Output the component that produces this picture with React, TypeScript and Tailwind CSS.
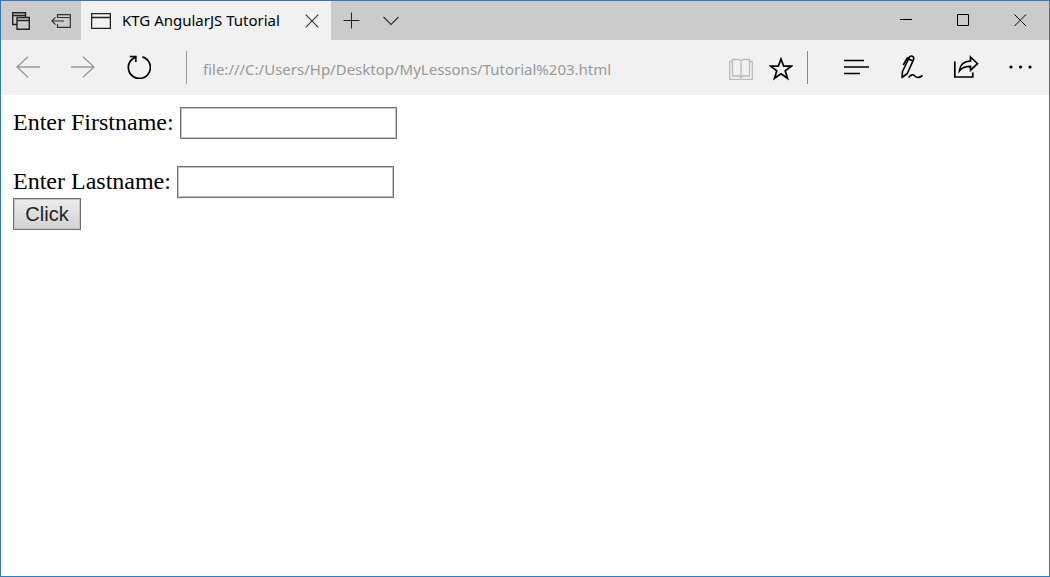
import { useState } from "react";
import type { ReactNode } from "react";

type IconProps = {
    w: number
    h: number
    className?: string
    children: ReactNode
}

const Icon = ({ w, h, className = "", children }: IconProps) => (
    <svg width={w} height={h} viewBox={`0 0 ${w} ${h}`} fill="none" stroke="currentColor" className={className} aria-hidden="true">
        {children}
    </svg>
)

type BarButtonProps = {
    label: string
    className: string
    children: ReactNode
}

const BarButton = ({ label, className, children }: BarButtonProps) => (
    <button type="button" aria-label={label} className={`flex h-full shrink-0 items-center justify-center ${className}`}>
        {children}
    </button>
)

const TitleBar = () => (
    <div className="flex h-[39px] items-stretch bg-[#cbcbcb] text-[#222]">
        <BarButton label="Tabs you've set aside" className="w-10">
            <Icon w={18} h={18}>
                <path d="M5 12.5H.7V.7h12.8V5M.7 3.5h12.8" strokeWidth="1.4" />
                <path d="M5 5.5h12.3v11.8H5zM5 8.5h12.3" strokeWidth="1.4" />
            </Icon>
        </BarButton>
        <BarButton label="Set these tabs aside" className="w-10">
            <Icon w={20} h={14} className="text-[#333]">
                <path d="M6.5 4V.7h12.8v12.6H6.5V10M6.5 3.5h13M.8 7H13M4.5 3.3.8 7l3.7 3.7" strokeWidth="1.2" />
            </Icon>
        </BarButton>
        <div className="flex w-[250px] items-center bg-[#f1f1f1] pr-3 pl-[10px]">
            <Icon w={20} h={16} className="shrink-0">
                <path d="M.6.6h18.8v14.8H.6zM.6 4.5h18.8" strokeWidth="1.3" />
            </Icon>
            <span className="ml-[11px] flex-1 whitespace-nowrap text-[15px] text-black">KTG AngularJS Tutorial</span>
            <button type="button" aria-label="Close tab">
                <Icon w={14} h={14} className="text-[#333]">
                    <path d="m.7.7 12.6 12.6M13.3.7.7 13.3" strokeWidth="1.1" />
                </Icon>
            </button>
        </div>
        <BarButton label="New tab" className="w-10">
            <Icon w={17} h={17}>
                <path d="M8.5.5v16M.5 8.5h16" />
            </Icon>
        </BarButton>
        <BarButton label="Show tab previews" className="w-10">
            <Icon w={16} h={10} className="text-[#333]">
                <path d="m.5 1 7.5 7.5L15.5 1" strokeWidth="1.2" />
            </Icon>
        </BarButton>
        <div className="ml-auto flex text-black">
            <BarButton label="Minimize" className="w-[57px]">
                <Icon w={13} h={13}>
                    <path d="M0 5.5h12" />
                </Icon>
            </BarButton>
            <BarButton label="Maximize" className="w-[57px]">
                <Icon w={13} h={13}>
                    <path d="M.5.5h11v11H.5z" />
                </Icon>
            </BarButton>
            <BarButton label="Close" className="w-[57px]">
                <Icon w={13} h={13}>
                    <path d="m.5.5 11.5 11.5M12 .5.5 12" />
                </Icon>
            </BarButton>
        </div>
    </div>
)

const AddressBar = () => {
    const [url, setUrl] = useState("file:///C:/Users/Hp/Desktop/MyLessons/Tutorial%203.html")

    return (
        <div className="flex h-[55px] items-center bg-[#f1f1f1] pr-px text-black">
            <BarButton label="Back" className="w-[55px] pb-0.5">
                <Icon w={25} h={22} className="text-[#999]">
                    <path d="M24 11H1M12 .7 1 11l11 10.3" strokeWidth="1.3" />
                </Icon>
            </BarButton>
            <BarButton label="Forward" className="w-[55px] pb-0.5">
                <Icon w={25} h={22} className="text-[#999]">
                    <path d="M0 11h23M12 .7 23 11 12 21.3" strokeWidth="1.3" />
                </Icon>
            </BarButton>
            <BarButton label="Refresh" className="w-[55px] pb-0.5">
                <Icon w={24} h={24}>
                    <path d="M15.5 1.9A11 11 0 1 1 5.3 4Q7 3 8.8 1.5" strokeWidth="1.7" />
                    <path d="M2.8 1.5h6v5.5" strokeWidth="1.7" />
                </Icon>
            </BarButton>
            <div className="mr-4 ml-5 h-[33px] w-px bg-[#999]" />
            <input
                type="text"
                aria-label="Address"
                value={url}
                onChange={(e) => setUrl(e.target.value)}
                className="min-w-0 flex-1 pt-1 text-[15px] text-[#999] outline-none"
            />
            <BarButton label="Reading view" className="w-10 pt-0.5">
                <Icon w={24} h={22} className="text-[#bbb]">
                    <path d="M3.5 1.5H10l2 1.5 2-1.5h6.5V18H14l-2 1.5-2-1.5H3.5zM12 3v16.5" strokeWidth="1.3" />
                    <path d="M3.5 3.5H.7v17.800h22.600V3.5h-2.800" strokeWidth="1.3" />
                </Icon>
            </BarButton>
            <BarButton label="Add to favorites" className="w-10 pt-0.5">
                <Icon w={24} h={24}>
                    <path d="m12 2 2.700 7.200h7.700l-6.200 4.600 2.300 7.500L12 16.700l-6.500 4.600 2.300-7.500-6.200-4.600h7.700z" strokeWidth="1.7" />
                </Icon>
            </BarButton>
            <div className="mr-5 ml-1.5 h-[33px] w-px bg-[#888]" />
            <BarButton label="Hub" className="w-[55px] pb-0.5">
                <Icon w={26} h={16}>
                    <path d="M1 1.500h20M1 8h25M1 14.500h16" strokeWidth="1.7" />
                </Icon>
            </BarButton>
            <BarButton label="Make a web note" className="w-[55px] pb-0.5">
                <Icon w={24} h={26}>
                    <path
                        d="M3 23.500 3.500 17.500 10 4Q11.300 1.200 13.400 2.200T14.500 5.700L8.300 19.500 3 23.500ZM9.500 5l4.600 2M10.300 3.300 8 4.300 4.300 11"
                        strokeWidth="1.6"
                        strokeLinejoin="round"
                    />
                    <path d="M9.500 23.500c2.500-3 4.500-3.500 6.300-1.500 2.200 2.400 4.500 2 7.700-.5" strokeWidth="1.6" />
                </Icon>
            </BarButton>
            <BarButton label="Share" className="w-[55px] pb-0.5">
                <Icon w={26} h={24}>
                    <path d="M1.800 6.500v15.500h18V17.500" strokeWidth="1.7" />
                    <path d="M17.500 2 24.500 8.700l-7 6.600v-4c-5 0-8.500 1-11 4.500.5-6 4.500-9.600 11-9.800z" strokeWidth="1.7" />
                </Icon>
            </BarButton>
            <BarButton label="More" className="w-[55px] pb-0.5">
                <Icon w={23} h={4}>
                    <g fill="currentColor" stroke="none">
                        <circle cx="2" cy="2" r="1.6" />
                        <circle cx="11.5" cy="2" r="1.6" />
                        <circle cx="21" cy="2" r="1.6" />
                    </g>
                </Icon>
            </BarButton>
        </div>
    )
}

const labelClass = "pb-0.5 leading-7"
const fieldClass = "h-8 w-[217px] border border-[#707070] bg-white px-1 text-xl shadow-[inset_0_0_0_1px_#c4c4c4] outline-none"

const App = () => {
    return (
        <div className="flex min-h-screen flex-col border border-[#2f7cbd] bg-white font-['Noto_Sans',sans-serif]">
            <TitleBar />
            <AddressBar />
            <main className="flex-1 px-3 py-3 font-['Liberation_Serif',serif] text-2xl text-black">
                <form onSubmit={(e) => e.preventDefault()}>
                    <div className="flex items-center gap-1.5">
                        <label htmlFor="firstname" className={labelClass}>Enter Firstname:</label>
                        <input id="firstname" type="text" className={fieldClass} />
                    </div>
                    <div className="mt-[27px] flex items-center gap-1.5">
                        <label htmlFor="lastname" className={labelClass}>Enter Lastname:</label>
                        <input id="lastname" type="text" className={fieldClass} />
                    </div>
                    <button
                        type="submit"
                        className="flex h-8 w-[68px] items-center justify-center border border-[#707070] bg-linear-to-b from-[#ececec] to-[#d2d2d2] font-['Liberation_Sans',sans-serif] text-xl text-[#222] shadow-[inset_0_0_0_1px_#c4c4c4]"
                    >
                        Click
                    </button>
                </form>
            </main>
        </div>
    )
}

export default App
